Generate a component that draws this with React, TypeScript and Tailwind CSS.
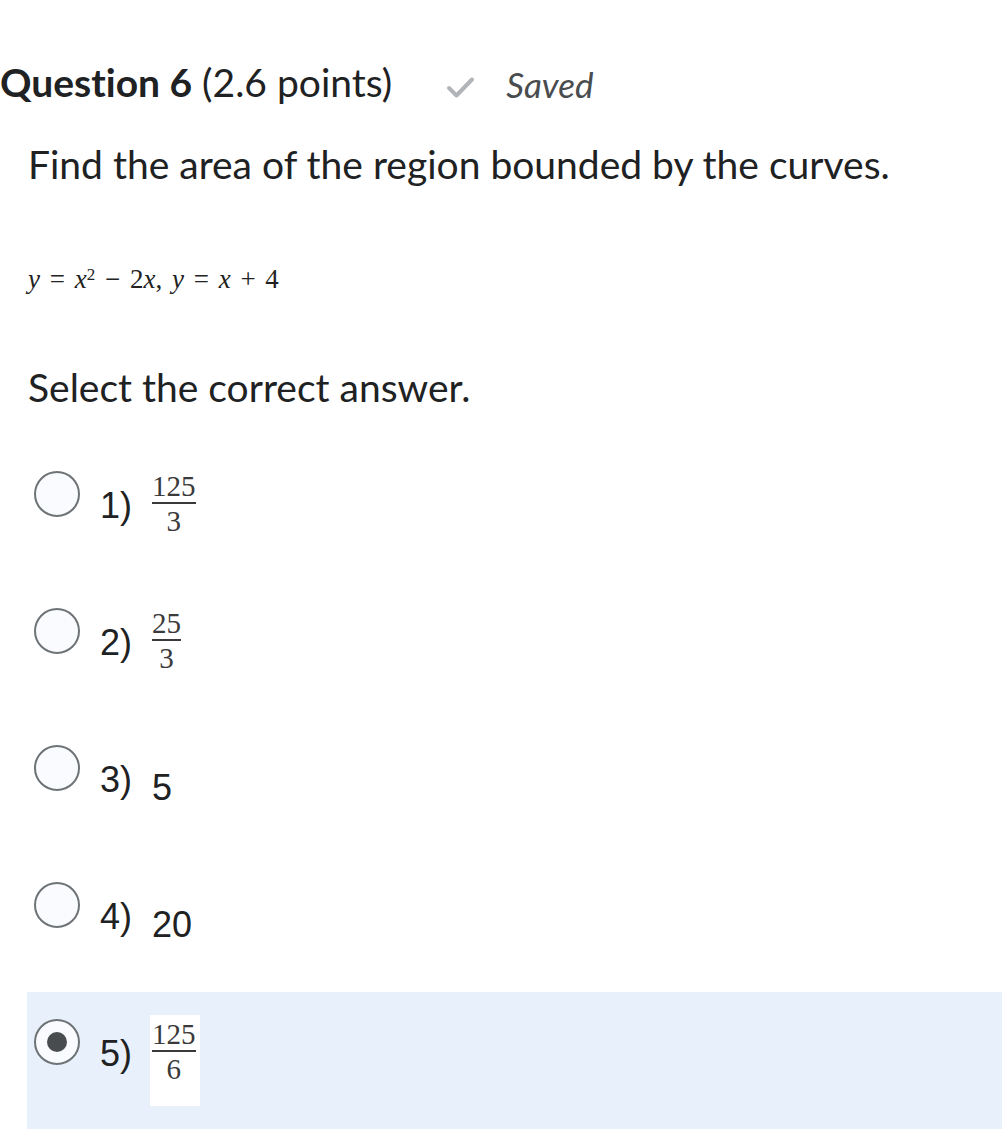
import React from "react"

type Choice = {
  label: string
  value?: string
  frac?: [string, string]
  selected?: boolean
}

const choices: Choice[] = [
  { label: "1)", frac: ["125", "3"] },
  { label: "2)", frac: ["25", "3"] },
  { label: "3)", value: "5" },
  { label: "4)", value: "20" },
  { label: "5)", frac: ["125", "6"], selected: true },
]

function Fraction({ top, bottom }: { top: string; bottom: string }) {
  return (
    <div className="mt-[23px] h-[91px] w-[50px] bg-white pl-[2px] pt-[5px]">
      <div className="inline-flex flex-col items-center font-['Liberation_Serif',serif] text-[29px] leading-none text-[#3a3a3a]">
        <span className="h-[29px]">{top}</span>
        <span className="mt-[1px] h-[2px] self-stretch bg-[#3a3a3a]" />
        <span className="mt-[3px] h-[29px]">{bottom}</span>
      </div>
    </div>
  )
}

function Radio({ selected }: { selected?: boolean }) {
  return (
    <div className="mt-[27px] flex h-[46px] w-[46px] shrink-0 items-center justify-center rounded-full border-2 border-[#6e7376] bg-[#f9fbff]">
      {selected && <div className="h-[20px] w-[20px] rounded-full bg-[#494c4e]" />}
    </div>
  )
}

export default function App() {
  return (
    <div className="h-[1132px] w-[1002px] overflow-hidden bg-white font-['Lato',sans-serif] text-[#202122] [font-variant-ligatures:none]">
      {/* header */}
      <div className="flex items-start pt-[59px]">
        <h2 className="ml-0 text-[39px] leading-[46px]">
          <span className="font-bold">Question 6</span> (2.6 points)
        </h2>
        <div className="ml-[54px] flex items-center">
          <svg width="30" height="24" viewBox="0 0 30 24" className="mt-[10px]">
            <path d="M3 12 L10.5 19.5 L26 3.5" fill="none" stroke="#b1b5b9" strokeWidth="4" strokeLinecap="round" strokeLinejoin="round" />
          </svg>
          <span className="ml-[30px] mt-[2px] text-[35px] italic leading-[46px] text-[#494c4e]">Saved</span>
        </div>
      </div>

      <div className="pl-[28px]">
        <p className="mt-[34px] text-[39px] leading-[46px]">Find the area of the region bounded by the curves.</p>

        <p className="mt-[77px] font-['Liberation_Serif',serif] text-[27px] leading-[30px] text-[#222] [word-spacing:3px]">
          <i>y</i> = <i>x</i>
          <sup className="text-[17px]">2</sup> − 2<i>x</i>, <i>y</i> = <i>x</i> + 4
        </p>

        <p className="mt-[70px] text-[39px] leading-[46px]">Select the correct answer.</p>
      </div>

      <div className="mt-[34px] pl-[27px]">
        {choices.map((c) => (
          <div
            key={c.label}
            className={`flex h-[137px] items-start pl-[7px] ${c.selected ? "bg-[#e8f1fb]" : ""}`}
          >
            <Radio selected={c.selected} />
            <span className="ml-[20px] mt-[44px] w-[50px] font-['Liberation_Sans',sans-serif] text-[36px] leading-none">
              {c.label}
            </span>
            {c.frac ? (
              <Fraction top={c.frac[0]} bottom={c.frac[1]} />
            ) : (
              <span className="mt-[52px] pl-[2px] font-['Liberation_Sans',sans-serif] text-[36px] leading-none">
                {c.value}
              </span>
            )}
          </div>
        ))}
      </div>
    </div>
  )
}
